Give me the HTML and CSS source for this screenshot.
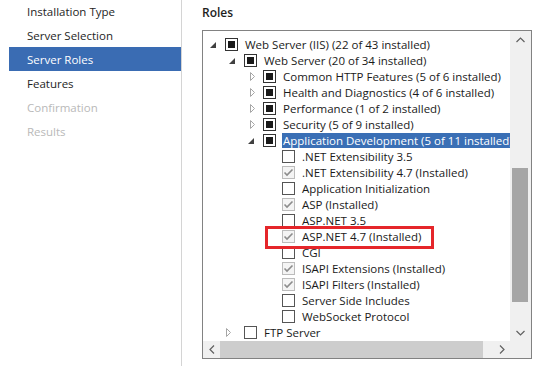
FILE: index.html
```html
<!DOCTYPE html>
<html>
<head>
<meta charset="utf-8">
<link rel="stylesheet" href="styles.css">
</head>
<body>
<div class="page">
  <nav class="nav">
    <div class="nav-list">
      <div class="nav-item">Installation Type</div>
      <div class="nav-item">Server Selection</div>
      <div class="nav-item active">Server Roles</div>
      <div class="nav-item">Features</div>
      <div class="nav-item disabled">Confirmation</div>
      <div class="nav-item disabled">Results</div>
    </div>
  </nav>
  <main class="main">
    <div class="title">Roles</div>
    <div class="box">
      <div class="viewport">
        <div class="tree">
          <div class="row l0"><span class="exp"><svg class="tri-open" width="6" height="6" viewBox="0 0 6 6"><polygon points="6,0 6,6 0,6"/></svg></span><span class="cb ind"></span><span class="lbl">Web Server (IIS) (22 of 43 installed)</span></div>
          <div class="row l1"><span class="exp"><svg class="tri-open" width="6" height="6" viewBox="0 0 6 6"><polygon points="6,0 6,6 0,6"/></svg></span><span class="cb ind"></span><span class="lbl">Web Server (20 of 34 installed)</span></div>
          <div class="row l2"><span class="exp closed"><svg class="tri-closed" width="5" height="9" viewBox="0 0 5 9"><polygon points="0.5,0.5 4.5,4.5 0.5,8.5"/></svg></span><span class="cb ind"></span><span class="lbl">Common HTTP Features (5 of 6 installed)</span></div>
          <div class="row l2"><span class="exp closed"><svg class="tri-closed" width="5" height="9" viewBox="0 0 5 9"><polygon points="0.5,0.5 4.5,4.5 0.5,8.5"/></svg></span><span class="cb ind"></span><span class="lbl">Health and Diagnostics (4 of 6 installed)</span></div>
          <div class="row l2"><span class="exp closed"><svg class="tri-closed" width="5" height="9" viewBox="0 0 5 9"><polygon points="0.5,0.5 4.5,4.5 0.5,8.5"/></svg></span><span class="cb ind"></span><span class="lbl">Performance (1 of 2 installed)</span></div>
          <div class="row l2"><span class="exp closed"><svg class="tri-closed" width="5" height="9" viewBox="0 0 5 9"><polygon points="0.5,0.5 4.5,4.5 0.5,8.5"/></svg></span><span class="cb ind"></span><span class="lbl">Security (5 of 9 installed)</span></div>
          <div class="row l2"><span class="exp"><svg class="tri-open" width="6" height="6" viewBox="0 0 6 6"><polygon points="6,0 6,6 0,6"/></svg></span><span class="cb ind"></span><span class="lbl sel">Application Development (5 of 11 installed)</span></div>
          <div class="row l3"><span class="cb"></span><span class="lbl">.NET Extensibility 3.5</span></div>
          <div class="row l3"><span class="cb chk"><svg width="13" height="13" viewBox="0 0 13 13"><polyline points="2.5,6.5 5,9 10.5,3.5"/></svg></span><span class="lbl">.NET Extensibility 4.7 (Installed)</span></div>
          <div class="row l3"><span class="cb"></span><span class="lbl">Application Initialization</span></div>
          <div class="row l3"><span class="cb chk"><svg width="13" height="13" viewBox="0 0 13 13"><polyline points="2.5,6.5 5,9 10.5,3.5"/></svg></span><span class="lbl">ASP (Installed)</span></div>
          <div class="row l3"><span class="cb"></span><span class="lbl">ASP.NET 3.5</span></div>
          <div class="row l3"><span class="cb chk"><svg width="13" height="13" viewBox="0 0 13 13"><polyline points="2.5,6.5 5,9 10.5,3.5"/></svg></span><span class="lbl">ASP.NET 4.7 (Installed)</span></div>
          <div class="row l3"><span class="cb"></span><span class="lbl">CGI</span></div>
          <div class="row l3"><span class="cb chk"><svg width="13" height="13" viewBox="0 0 13 13"><polyline points="2.5,6.5 5,9 10.5,3.5"/></svg></span><span class="lbl">ISAPI Extensions (Installed)</span></div>
          <div class="row l3"><span class="cb chk"><svg width="13" height="13" viewBox="0 0 13 13"><polyline points="2.5,6.5 5,9 10.5,3.5"/></svg></span><span class="lbl">ISAPI Filters (Installed)</span></div>
          <div class="row l3"><span class="cb"></span><span class="lbl">Server Side Includes</span></div>
          <div class="row l3"><span class="cb"></span><span class="lbl">WebSocket Protocol</span></div>
          <div class="row l1"><span class="exp closed ftp"><svg class="tri-closed" width="5" height="9" viewBox="0 0 5 9"><polygon points="0.5,0.5 4.5,4.5 0.5,8.5"/></svg></span><span class="cb"></span><span class="lbl">FTP Server</span></div>
        </div>
        <div class="highlight-box"></div>
      </div>
      <div class="vscroll">
        <div class="sb-btn"><svg width="9" height="6" viewBox="0 0 9 6"><polyline points="0.5,5 4.5,1 8.5,5"/></svg></div>
        <div class="vtrack">
          <div class="vthumb"></div>
        </div>
        <div class="sb-btn"><svg width="9" height="6" viewBox="0 0 9 6"><polyline points="0.5,1 4.5,5 8.5,1"/></svg></div>
      </div>
      <div class="hscroll">
        <div class="sb-btn h"><svg width="6" height="9" viewBox="0 0 6 9"><polyline points="5,0.5 1,4.5 5,8.5"/></svg></div>
        <div class="htrack">
          <div class="hthumb"></div>
        </div>
        <div class="sb-btn h"><svg width="6" height="9" viewBox="0 0 6 9"><polyline points="1,0.5 5,4.5 1,8.5"/></svg></div>
      </div>
      <div class="corner"></div>
    </div>
  </main>
</div>
</body>
</html>
```

FILE: styles.css
```css
* { box-sizing: border-box; }
html, body {
  margin: 0;
  padding: 0;
  background: #ffffff;
}
body {
  width: 535px;
  height: 366px;
  overflow: hidden;
  font-family: "Open Sans", "Noto Sans", "Liberation Sans", sans-serif;
  font-size: 12px;
  color: #1e1e1e;
}
.page {
  display: flex;
  height: 366px;
}
.nav {
  width: 182px;
  padding-left: 9px;
  border-right: 1px solid #d4d4d4;
  flex: none;
}
.nav-list {
  margin-top: -1px;
}
.nav-item {
  height: 24px;
  line-height: 23px;
  padding-top: 1px;
  padding-left: 18px;
  font-size: 11.5px;
  white-space: nowrap;
}
.nav-item.active {
  background: #3a6cb3;
  color: #ffffff;
}
.nav-item.disabled {
  color: #b9b9b9;
}
.main {
  padding-left: 20px;
  flex: none;
}
.title {
  height: 30px;
  line-height: 26px;
  font-weight: 600;
  color: #1e1e1e;
}
.box {
  width: 330px;
  height: 329px;
  border: 1px solid #828282;
  display: grid;
  grid-template-columns: 307px 21px;
  grid-template-rows: 310px 17px;
}
.viewport {
  position: relative;
  overflow: hidden;
  padding-top: 5px;
}
.tree {
  font-size: 11.5px;
  color: #1a1a1a;
}
.row {
  height: 16px;
  display: flex;
  align-items: center;
  white-space: nowrap;
}
.row.l0 { padding-left: 4px; }
.row.l1 { padding-left: 23px; }
.row.l2 { padding-left: 42px; }
.row.l3 { padding-left: 79px; }
.exp {
  width: 18px;
  height: 16px;
  flex: none;
  display: flex;
  align-items: center;
  padding-left: 3px;
  padding-top: 2px;
}
.exp.closed {
  padding-left: 5px;
  padding-top: 0;
}
.exp.ftp {
  padding-left: 0;
}
.tri-open polygon { fill: #404040; }
.tri-closed polygon { fill: none; stroke: #a6a6a6; stroke-width: 1; }
.cb {
  width: 13px;
  height: 13px;
  flex: none;
  border: 1px solid #555555;
  background: #ffffff;
  position: relative;
}
.cb.ind {
  border-color: #333333;
}
.cb.ind::after {
  content: "";
  position: absolute;
  left: 2px;
  top: 2px;
  width: 7px;
  height: 7px;
  background: #1a1a1a;
}
.cb.chk {
  border-color: #bcbcbc;
  background: #f4f4f4;
}
.cb.chk svg {
  position: absolute;
  left: -1px;
  top: -1px;
}
.cb.chk polyline {
  fill: none;
  stroke: #8c8c8c;
  stroke-width: 1.6;
}
.lbl {
  margin-left: 6px;
  padding: 0 1px;
  height: 15px;
  line-height: 15px;
}
.lbl.sel {
  background: #3a6fb5;
  color: #ffffff;
}
.highlight-box {
  position: absolute;
  left: 62px;
  top: 195px;
  width: 169px;
  height: 23px;
  border: 3px solid #e5262a;
}
.vscroll {
  background: #f0f0f0;
  display: flex;
  flex-direction: column;
}
.sb-btn {
  height: 17px;
  flex: none;
  display: flex;
  align-items: center;
  justify-content: center;
}
.sb-btn.h {
  width: 17px;
  height: 17px;
}
.sb-btn polyline {
  fill: none;
  stroke: #606060;
  stroke-width: 1.2;
}
.vtrack {
  flex: 1;
  padding-top: 120px;
}
.vthumb {
  margin: 0 3px 0 2px;
  height: 134px;
  background: #a6a6a6;
}
.hscroll {
  background: #f0f0f0;
  display: flex;
}
.htrack {
  flex: 1;
}
.hthumb {
  width: 263px;
  height: 100%;
  background: #cdcdcd;
  padding: 2px 0;
}
.corner {
  background: #f0f0f0;
}
```
